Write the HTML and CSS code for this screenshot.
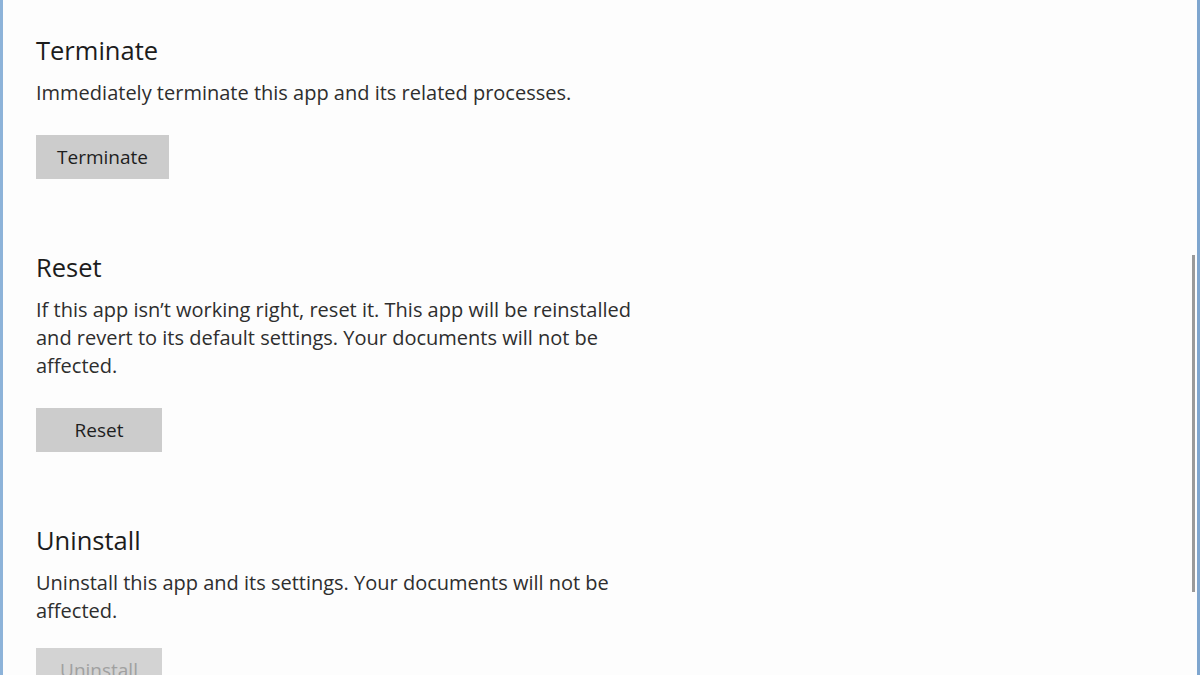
FILE: index.html
```html
<!DOCTYPE html>
<html lang="en">
<head>
<meta charset="utf-8">
<title>App settings</title>
<link rel="stylesheet" href="styles.css">
</head>
<body>
<div class="window">
  <main class="content">
    <section class="section">
      <h2 class="title">Terminate</h2>
      <p class="desc">Immediately terminate this app and its related processes.</p>
      <button class="btn">Terminate</button>
    </section>
    <section class="section">
      <h2 class="title">Reset</h2>
      <p class="desc">If this app isn’t working right, reset it. This app will be reinstalled<br>and revert to its default settings. Your documents will not be<br>affected.</p>
      <button class="btn">Reset</button>
    </section>
    <section class="section compact">
      <h2 class="title">Uninstall</h2>
      <p class="desc">Uninstall this app and its settings. Your documents will not be<br>affected.</p>
      <button class="btn disabled">Uninstall</button>
    </section>
  </main>
  <div class="scrolltrack"><div class="thumb"></div></div>
</div>
</body>
</html>
```

FILE: styles.css
```css
html, body {
  margin: 0;
  padding: 0;
  height: 100%;
  overflow: hidden;
  background: #fdfdfd;
}
body {
  font-family: "Open Sans", "Noto Sans", "Liberation Sans", sans-serif;
  color: #2b2b2b;
}
.window {
  display: flex;
  height: 675px;
  border-left: 3px solid #8db3d9;
  border-right: 3px solid #7fa6cf;
  box-sizing: border-box;
}
.content {
  flex: 1;
  padding: 34px 0 0 33px;
}
.section {
  display: flex;
  flex-direction: column;
  align-items: flex-start;
  margin-bottom: 72px;
}
.title {
  margin: 0;
  font-weight: 400;
  font-size: 25.5px;
  line-height: 32px;
  color: #1c1c1c;
}
.desc {
  margin: 13px 0 0 0;
  font-size: 20px;
  line-height: 28px;
  color: #2e2e2e;
}
.btn {
  margin-top: 28px;
  height: 44px;
  min-width: 126px;
  padding: 0 21px;
  border: none;
  background: #cccccc;
  font-family: inherit;
  font-size: 19px;
  color: #1e1e1e;
}
.compact .btn {
  margin-top: 23px;
}
.btn.disabled {
  color: #a0a0a0;
  background: #d3d3d3;
}
.scrolltrack {
  width: 10px;
  display: flex;
  flex-direction: column;
  align-items: flex-end;
  padding-top: 255px;
  padding-right: 2px;
}
.thumb {
  width: 3px;
  height: 337px;
  background: #9a9a9a;
}
```
